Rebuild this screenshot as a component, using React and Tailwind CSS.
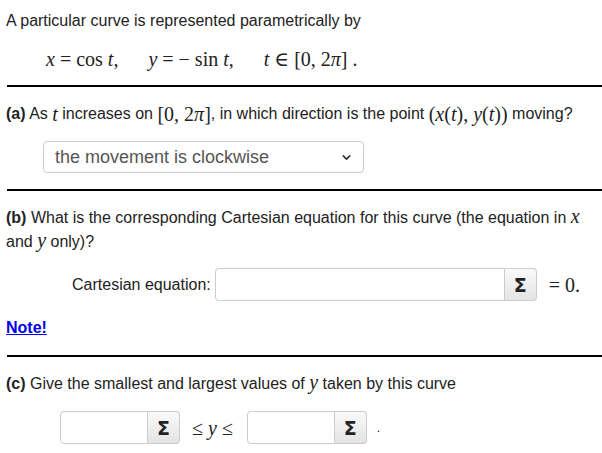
import { ChevronDown } from "lucide-react";

const mathFont = { fontFamily: '"Liberation Serif", "DejaVu Serif", serif' };

function M({ children, className = "" }) {
  return (
    <span className={"italic text-[20px] leading-none " + className} style={mathFont}>
      {children}
    </span>
  );
}

function R({ children, className = "" }) {
  return (
    <span className={"not-italic text-[20px] leading-none " + className} style={mathFont}>
      {children}
    </span>
  );
}

function MathInput({ width }) {
  return (
    <div className="flex h-[33px]">
      <input
        className="h-full border border-[#ccc] rounded-l-[4px] bg-white outline-none px-2"
        style={{ width }}
      />
      <button className="h-full w-[32px] border border-l-0 border-[#ccc] rounded-r-[4px] bg-gradient-to-b from-[#fafafa] to-[#e3e3e3] flex items-center justify-center text-[19px] font-bold text-[#222]" style={{ fontFamily: '"DejaVu Sans", sans-serif' }}>
        Σ
      </button>
    </div>
  );
}

export default function App() {
  return (
    <div className="w-[602px] h-[453px] bg-white text-[#222] text-[16px] leading-[24px] overflow-hidden" style={{ fontFamily: '"Liberation Sans", Arial, sans-serif' }}>
      <div className="pl-[6px] pt-[9px]">A particular curve is represented parametrically by</div>
      <div className="pl-[46px] pt-[11px] h-[40px] flex items-center whitespace-pre">
        <M>x</M><R> = cos </R><M>t</M><R>,      </R>
        <M>y</M><R> = − sin </R><M>t</M><R>,      </R>
        <M>t</M><R> ∈ [0, 2</R><M>π</M><R>] .</R>
      </div>
      <div className="ml-[7px] mt-[12px] border-t-2 border-black" />

      <div className="pl-[6px] pt-[15px] h-[39px] flex items-center whitespace-pre">
        <span><b>(a)</b> As </span><M>t</M><span> increases on </span>
        <R>[0, 2<i>π</i>]</R>
        <span>, in which direction is the point </span>
        <R>(<i>x</i>(<i>t</i>), <i>y</i>(<i>t</i>))</R>
        <span> moving?</span>
      </div>
      <div className="pl-[43px] pt-[15px]">
        <div className="w-[321px] h-[32px] border border-[#ccc] rounded-[4px] flex items-center justify-between pl-[11px] pr-[10px] text-[#555] text-[18px]">
          <span>the movement is clockwise</span>
          <ChevronDown size={13} strokeWidth={3} className="text-[#333]" />
        </div>
      </div>
      <div className="ml-[7px] mt-[16px] border-t-2 border-black" />

      <div className="pl-[6px] pt-[15px] pr-[20px]">
        <b>(b)</b> What is the corresponding Cartesian equation for this curve (the equation in <M>x</M>
        <br />and <M>y</M> only)?
      </div>
      <div className="pl-[72px] pt-[14px] flex items-center">
        <span className="mr-[4px]">Cartesian equation:</span>
        <MathInput width={290} />
        <R className="ml-[12px]">= 0.</R>
      </div>
      <div className="pl-[6px] pt-[15px]">
        <a href="#" className="text-[#0000ee] underline font-bold text-[16px]">Note!</a>
      </div>
      <div className="ml-[7px] mt-[15px] border-t-2 border-black" />

      <div className="pl-[6px] pt-[15px]">
        <b>(c)</b> Give the smallest and largest values of <M>y</M> taken by this curve
      </div>
      <div className="pl-[60px] pt-[15px] flex items-center">
        <MathInput width={88} />
        <R className="ml-[12px] whitespace-pre">≤ <i>y</i> ≤</R>
        <span className="ml-[14px]" />
        <MathInput width={88} />
        <span className="ml-[10px] text-[12px]">.</span>
      </div>
    </div>
  );
}
